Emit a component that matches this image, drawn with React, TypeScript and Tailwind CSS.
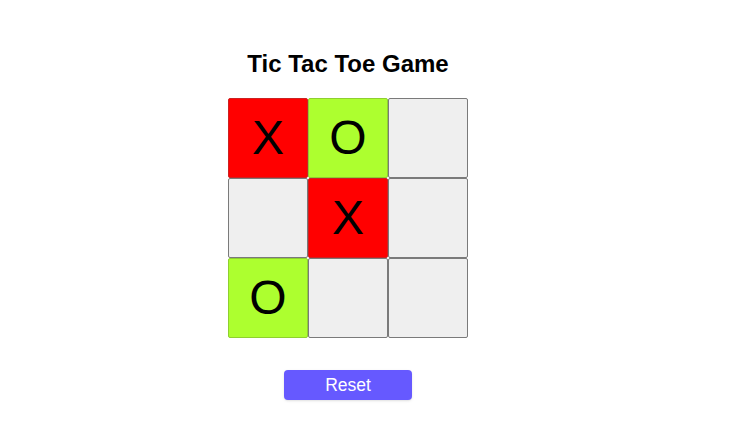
import React, { useState } from 'react';

type Mark = 'X' | 'O' | null;

const initial: Mark[] = ['X', 'O', null, null, 'X', null, 'O', null, null];

const cellClass = (m: Mark) => {
  if (m === 'X') return 'bg-[#ff0000] border-[#cc2222]';
  if (m === 'O') return 'bg-[#adff2f] border-[#8fcf30]';
  return 'bg-[#efefef] border-[#7a7a7a]';
};

const App: React.FC = () => {
  const [board, setBoard] = useState<Mark[]>(initial);

  return (
    <div className="min-h-[447px] bg-white pr-[34px] flex flex-col items-center font-['Liberation_Sans',Arial,sans-serif]">
      <h1 className="mt-[50px] text-[24px] leading-[28px] font-bold text-black">Tic Tac Toe Game</h1>
      <div className="mt-[20px] grid grid-cols-[80px_80px_80px] grid-rows-[80px_80px_80px]">
        {board.map((m, i) => (
          <button
            key={i}
            className={`border rounded-[2px] flex items-center justify-center text-[48px] leading-none text-black ${cellClass(m)}`}
          >
            {m}
          </button>
        ))}
      </div>
      <button
        onClick={() => setBoard(Array(9).fill(null))}
        className="mt-[32px] w-[128px] h-[30px] rounded-[4px] bg-[#6659ff] text-white text-[17.5px] shadow-sm"
      >
        Reset
      </button>
    </div>
  );
};

export default App;
